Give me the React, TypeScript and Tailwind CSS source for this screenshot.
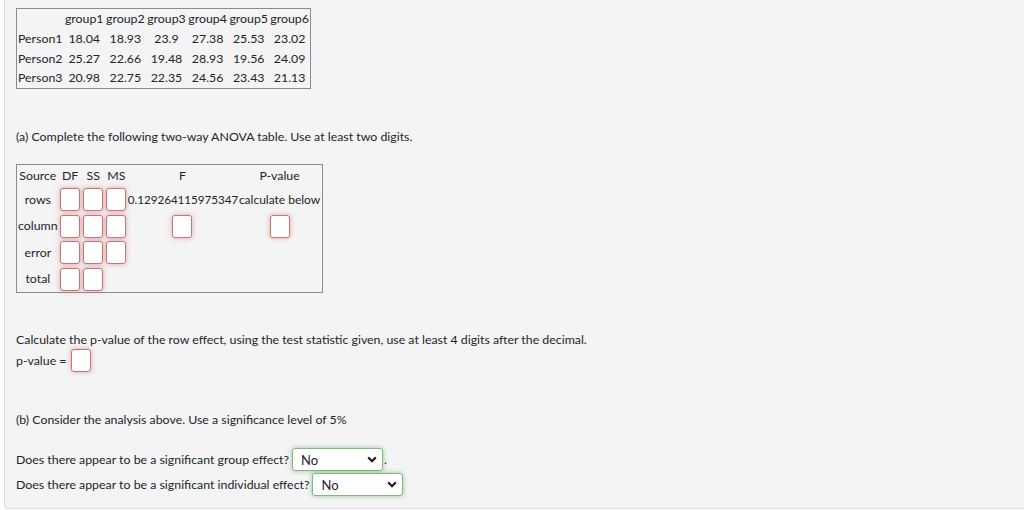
import React from 'react';

const groups = ['group1', 'group2', 'group3', 'group4', 'group5', 'group6'];

const data = [
  { name: 'Person1', values: ['18.04', '18.93', '23.9', '27.38', '25.53', '23.02'] },
  { name: 'Person2', values: ['25.27', '22.66', '19.48', '28.93', '19.56', '24.09'] },
  { name: 'Person3', values: ['20.98', '22.75', '22.35', '24.56', '23.43', '21.13'] },
];

const AnswerBox: React.FC = () => (
  <input
    type="text"
    className="block mx-auto w-[20px] h-[23px] rounded-[3px] border border-[#c97575] bg-white shadow-[0_0_5px_rgba(205,90,90,0.5)] outline-none"
  />
);

const YesNoSelect: React.FC = () => (
  <span className="relative inline-block align-middle">
    <select
      defaultValue="No"
      className="appearance-none w-[91px] h-[23px] rounded-[3px] border border-[#7fbb7f] bg-white pl-[8px] text-[13px] text-[#212529] shadow-[0_0_5px_rgba(90,170,90,0.6)] outline-none"
    >
      <option>No</option>
      <option>Yes</option>
    </select>
    <svg
      className="pointer-events-none absolute right-[6px] top-[8px]"
      width="10"
      height="7"
      viewBox="0 0 10 7"
    >
      <path d="M1.2 1.4 L5 5.2 L8.8 1.4" fill="none" stroke="#222" strokeWidth="2.2" />
    </svg>
  </span>
);

const anovaRows = [
  { label: 'rows', boxes: 3 },
  { label: 'column', boxes: 3 },
  { label: 'error', boxes: 3 },
  { label: 'total', boxes: 2 },
];

export default function App() {
  return (
    <div className="w-[1024px] h-[510px] overflow-hidden bg-white">
      <div className="ml-[4px] w-[1040px] h-[509px] bg-[#f4f4f4] border-l border-b border-[#dcdcdc] rounded-bl-[4px] pl-[11px] pt-[8px] text-[12.35px] leading-4 text-[#212529] font-['Lato',sans-serif]">
        {/* data table */}
        <table className="w-[295px] table-fixed border-collapse border border-[#8c8c8c]">
          <colgroup>
            <col className="w-[47px]" />
            {groups.map((g) => (
              <col key={g} className="w-[41px]" />
            ))}
          </colgroup>
          <tbody>
            <tr className="h-[20px]">
              <td />
              {groups.map((g) => (
                <td key={g} className="text-center whitespace-nowrap p-0">
                  {g}
                </td>
              ))}
            </tr>
            {data.map((row) => (
              <tr key={row.name} className="h-[20px]">
                <td className="pl-[1px] whitespace-nowrap">{row.name}</td>
                {row.values.map((v, i) => (
                  <td key={i} className="text-center p-0">
                    {v}
                  </td>
                ))}
              </tr>
            ))}
          </tbody>
        </table>

        <p className="mt-[40px]">(a) Complete the following two-way ANOVA table. Use at least two digits.</p>

        {/* ANOVA table */}
        <table className="mt-[19px] w-[307px] table-fixed border-collapse border border-[#8c8c8c]">
          <colgroup>
            <col className="w-[42px]" />
            <col className="w-[23px]" />
            <col className="w-[23px]" />
            <col className="w-[23px]" />
            <col className="w-[109px]" />
            <col className="w-[85px]" />
          </colgroup>
          <tbody>
            <tr className="h-[22px] text-center">
              <td className="p-0">Source</td>
              <td className="p-0">DF</td>
              <td className="p-0">SS</td>
              <td className="p-0">MS</td>
              <td className="p-0">F</td>
              <td className="p-0">P-value</td>
            </tr>
            {anovaRows.map((r, ri) => (
              <tr key={r.label} className="h-[26.5px]">
                <td className="p-0 text-center whitespace-nowrap">{r.label}</td>
                {[0, 1, 2].map((i) => (
                  <td key={i} className="p-0">
                    {i < r.boxes && <AnswerBox />}
                  </td>
                ))}
                <td className="p-0 text-center whitespace-nowrap">
                  {ri === 0 && <span className="text-[11.6px]">0.129264115975347</span>}
                  {ri === 1 && <AnswerBox />}
                </td>
                <td className="p-0 text-center whitespace-nowrap">
                  {ri === 0 && <span className="text-[12px]">calculate below</span>}
                  {ri === 1 && <AnswerBox />}
                </td>
              </tr>
            ))}
          </tbody>
        </table>

        <p className="mt-[39px]">
          Calculate the p-value of the row effect, using the test statistic given, use at least 4 digits after the decimal.
        </p>
        <div className="mt-[1px] flex items-center gap-[4px]">
          <span>p-value =</span>
          <input
            type="text"
            className="w-[20px] h-[23px] rounded-[3px] border border-[#c97575] bg-white shadow-[0_0_5px_rgba(205,90,90,0.5)] outline-none"
          />
        </div>

        <p className="mt-[40px]">(b) Consider the analysis above. Use a significance level of 5%</p>

        <div className="mt-[20px] flex items-center">
          <span className="mr-[3px]">Does there appear to be a significant group effect?</span>
          <YesNoSelect />
          <span className="ml-[1px]">.</span>
        </div>
        <div className="mt-[2px] flex items-center">
          <span className="mr-[3px]">Does there appear to be a significant individual effect?</span>
          <YesNoSelect />
        </div>
      </div>
    </div>
  );
}
